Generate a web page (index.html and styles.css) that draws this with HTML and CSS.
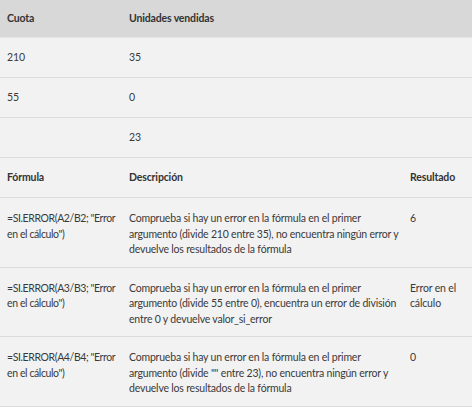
FILE: index.html
```html
<!DOCTYPE html>
<html lang="es">
<head>
<meta charset="utf-8">
<link rel="stylesheet" href="styles.css">
</head>
<body>
<table class="tbl t1">
  <colgroup><col class="c1"><col></colgroup>
  <thead>
    <tr class="head"><th>Cuota</th><th>Unidades vendidas</th></tr>
  </thead>
  <tbody>
    <tr><td>210</td><td>35</td></tr>
    <tr><td>55</td><td>0</td></tr>
    <tr><td></td><td>23</td></tr>
  </tbody>
</table>
<table class="tbl t2">
  <colgroup><col class="c1"><col class="c2"><col></colgroup>
  <thead>
    <tr class="head2"><th>Fórmula</th><th>Descripción</th><th>Resultado</th></tr>
  </thead>
  <tbody>
    <tr><td class="formula">=SI.ERROR(A2/B2; "Error en el cálculo")</td><td class="desc">Comprueba si hay un error en la fórmula en el primer argumento (divide 210 entre 35), no encuentra ningún error y devuelve los resultados de la fórmula</td><td>6</td></tr>
    <tr><td class="formula">=SI.ERROR(A3/B3; "Error en el cálculo")</td><td class="desc">Comprueba si hay un error en la fórmula en el primer argumento (divide 55 entre 0), encuentra un error de división entre 0 y devuelve valor_si_error</td><td>Error en el cálculo</td></tr>
    <tr><td class="formula">=SI.ERROR(A4/B4; "Error en el cálculo")</td><td class="desc">Comprueba si hay un error en la fórmula en el primer argumento (divide "" entre 23), no encuentra ningún error y devuelve los resultados de la fórmula</td><td>0</td></tr>
  </tbody>
</table>
</body>
</html>
```
FILE: styles.css
```css
html, body { margin: 0; padding: 0; background: #ffffff; }
body {
  font-family: Lato, "Open Sans", sans-serif;
  font-size: 10.5px;
  letter-spacing: -0.15px;
  color: #3a3a3a;
}
.tbl {
  width: 472px;
  border-collapse: collapse;
  table-layout: fixed;
  background: #f2f2f2;
}
.c1 { width: 122px; }
.c2 { width: 281px; }
.tbl th, .tbl td {
  text-align: left;
  vertical-align: top;
  padding: 0 4px 0 7px;
  line-height: 15.5px;
}
.tbl th { font-weight: 700; color: #333; }
.t1 .head th { background: #d8d8d8; height: 37px; vertical-align: middle; border-bottom: 1px solid #e6e6e6; }
.t1 tbody td { height: 39px; vertical-align: middle; border-bottom: 1px solid #dcdcdc; }
.t2 .head2 th { height: 39px; vertical-align: middle; border-bottom: 1px solid #dcdcdc; }
.t2 tbody td { padding-top: 13px; padding-bottom: 9px; height: 46px; border-bottom: 1px solid #dcdcdc; }
.t2 tbody td.formula { letter-spacing: -0.4px; padding-right: 0; }
.t2 tbody td.desc { letter-spacing: -0.2px; padding-right: 0; }
```
